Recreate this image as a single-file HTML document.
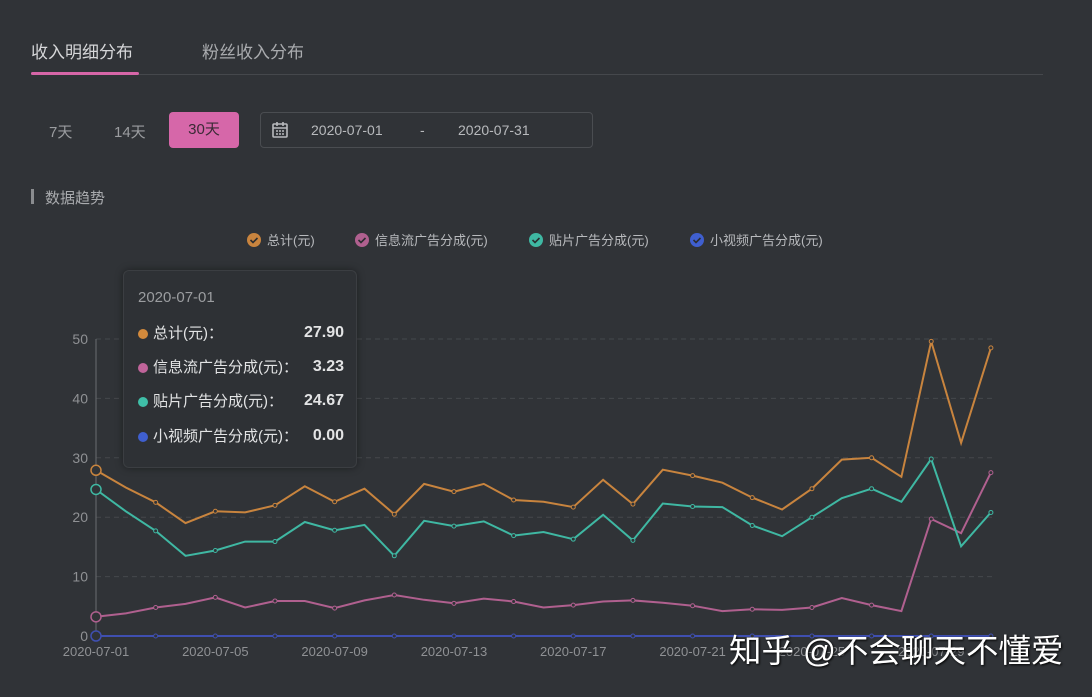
<!DOCTYPE html>
<html><head><meta charset="utf-8"><style>
*{margin:0;padding:0;box-sizing:border-box}
body{width:1092px;height:697px;background:#303337;font-family:"Liberation Sans","Noto Sans CJK SC",sans-serif;color:#bfc1c4;position:relative;overflow:hidden}
.a{position:absolute;white-space:nowrap}
.r{display:flex;justify-content:space-between;align-items:center;font-size:15px;color:#e3e4e5;width:206px;left:14px}
.r i{display:inline-block;width:10px;height:10px;border-radius:50%;margin-right:5px;vertical-align:-1px}
.r b{font-size:16px}
</style></head><body>
<div class="a" style="left:31px;top:38px;font-size:17px;color:#d6d7d9">收入明细分布</div>
<div class="a" style="left:202px;top:38px;font-size:17px;color:#a9abae">粉丝收入分布</div>
<div class="a" style="left:31px;top:74px;width:1012px;height:1px;background:#45484c"></div>
<div class="a" style="left:31px;top:72px;width:108px;height:3px;background:#d666a8;border-radius:2px"></div>
<div class="a" style="left:49px;top:121px;font-size:15px;color:#9b9da0">7天</div>
<div class="a" style="left:114px;top:121px;font-size:15px;color:#9b9da0">14天</div>
<div class="a" style="left:169px;top:112px;width:70px;height:36px;background:#d667a9;border-radius:4px;color:#3a2a35;font-size:15px;text-align:center;line-height:36px">30天</div>
<div class="a" style="left:260px;top:112px;width:333px;height:36px;border:1px solid #4a4d51;border-radius:4px"></div>
<svg class="a" style="left:271px;top:121px" width="18" height="18" viewBox="0 0 18 18" fill="none" stroke="#b8babd" stroke-width="1.6"><rect x="2" y="3" width="14" height="13" rx="1"/><path d="M2 7h14M6 1v4M12 1v4M5 10h2M8 10h2M11 10h2M5 13h2M8 13h2M11 13h2"/></svg>
<div class="a" style="left:311px;top:122px;font-size:14px;color:#b8babd">2020-07-01</div>
<div class="a" style="left:420px;top:122px;font-size:14px;color:#b8babd">-</div>
<div class="a" style="left:458px;top:122px;font-size:14px;color:#b8babd">2020-07-31</div>
<div class="a" style="left:31px;top:189px;width:3px;height:15px;background:#8a8c8f"></div>
<div class="a" style="left:45px;top:187px;font-size:15px;color:#a9abae">数据趋势</div>
<svg id="c" class="a" style="left:0;top:0" width="1092" height="697"></svg>
<div class="a" style="left:123px;top:270px;width:234px;height:198px;background:#2e3135;border:1px solid #3b3e42;border-radius:6px;box-shadow:0 0 8px rgba(0,0,0,.4)">
<div class="a" style="left:14px;top:18px;font-size:15px;color:#9b9da0">2020-07-01</div>
<div class="a r" style="top:51px"><span><i style="background:#d38a3c"></i>总计(元)：</span><b>27.90</b></div>
<div class="a r" style="top:85px"><span><i style="background:#c0649a"></i>信息流广告分成(元)：</span><b>3.23</b></div>
<div class="a r" style="top:119px"><span><i style="background:#3fbfa8"></i>贴片广告分成(元)：</span><b>24.67</b></div>
<div class="a r" style="top:154px"><span><i style="background:#3f5fcf"></i>小视频广告分成(元)：</span><b>0.00</b></div>
</div>
<div class="a" style="left:729px;top:625px;font-size:32.5px;color:#fff;text-shadow:1px 1px 2px #000">知乎 @不会聊天不懂爱</div>
<script>
var T=[27.9,25,22.5,19,21,20.8,22,25.2,22.6,24.8,20.5,25.6,24.3,25.6,22.9,22.6,21.7,26.3,22.2,28,27,25.8,23.3,21.3,24.8,29.7,30,26.8,49.6,32.5,48.5];
var G=[24.67,21,17.7,13.5,14.4,15.9,15.9,19.2,17.8,18.7,13.5,19.4,18.5,19.3,16.9,17.5,16.3,20.4,16.1,22.3,21.8,21.7,18.6,16.8,20,23.2,24.8,22.6,29.8,15.1,20.8];
var P=[3.23,3.8,4.8,5.4,6.5,4.8,5.9,5.9,4.7,6,6.9,6.1,5.5,6.3,5.8,4.8,5.2,5.8,6,5.6,5.1,4.2,4.5,4.4,4.8,6.4,5.2,4.2,19.7,17.3,27.5];
var B=T.map(function(){return 0});
function X(i){return 96+i*29.83}function Y(v){return 636-v*5.94}
var s='';
for(var k=1;k<=5;k++)s+='<line x1="96" x2="992" y1="'+Y(k*10)+'" y2="'+Y(k*10)+'" stroke="#45484c" stroke-dasharray="5,4"/>';
for(var k=0;k<=5;k++)s+='<text x="88" y="'+(Y(k*10)+5)+'" fill="#8f9194" font-size="14" text-anchor="end" font-family="Liberation Sans">'+(k*10)+'</text>';
s+='<line x1="96" x2="96" y1="339" y2="636" stroke="#6a6d70"/>';
var d=['01','05','09','13','17','21','25','29'];
for(var k=0;k<8;k++)s+='<text x="'+X(k*4)+'" y="656" fill="#8f9194" font-size="13" text-anchor="middle" font-family="Liberation Sans">2020-07-'+d[k]+'</text>';
function L(a,c){var p=a.map(function(v,i){return X(i).toFixed(1)+','+Y(v).toFixed(1)}).join(' ');
s+='<polyline points="'+p+'" fill="none" stroke="'+c+'" stroke-width="2"/>';
a.forEach(function(v,i){if(i%2==0&&i>0)s+='<circle cx="'+X(i)+'" cy="'+Y(v)+'" r="2" fill="#303337" stroke="'+c+'"/>'});
s+='<circle cx="'+X(0)+'" cy="'+Y(a[0])+'" r="5" fill="#303337" stroke="'+c+'" stroke-width="1.5"/>';}
L(B,'#3f4fb0');L(P,'#b0608f');L(G,'#3fb8a3');L(T,'#c8843e');
var lg=[[254,'#c8843e','总计(元)'],[362,'#b0608f','信息流广告分成(元)'],[536,'#3fb8a3','贴片广告分成(元)'],[697,'#3f5fcf','小视频广告分成(元)']];
lg.forEach(function(l){s+='<circle cx="'+l[0]+'" cy="240" r="7" fill="'+l[1]+'"/><path d="M'+(l[0]-3.5)+' 240l2.5 2.5 4.5-4.5" stroke="#2b2d30" stroke-width="1.6" fill="none"/><text x="'+(l[0]+13)+'" y="245" fill="#b8babd" font-size="13" font-family="Liberation Sans, Noto Sans CJK SC, sans-serif">'+l[2]+'</text>'});
document.getElementById('c').innerHTML=s;
</script>
</body></html>
